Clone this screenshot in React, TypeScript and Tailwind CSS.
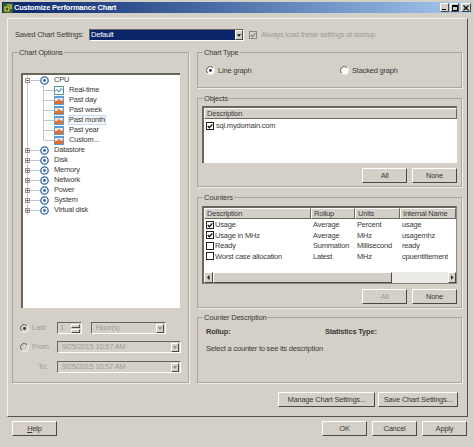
import type { ReactNode } from 'react'

const RAISED = 'border border-t-white border-l-white border-r-[#4a4842] border-b-[#4a4842]'
const SUNKEN = 'border border-t-[#6a675f] border-l-[#6a675f] border-r-white border-b-white'
const FONT = "font-['Liberation_Sans',Arial,sans-serif]"
const TRUNK = 'w-[5px] h-full shrink-0 flex items-center bg-[linear-gradient(#c4c4c4,#c4c4c4)] bg-no-repeat bg-center bg-[length:1px_100%]'

function Btn({ label, w, disabled }: { label: ReactNode; w: string; disabled?: boolean }) {
  return (
    <div className={`${w} h-[15px] ${RAISED} flex items-center justify-center whitespace-nowrap bg-[#d4d0c8] ${disabled ? 'text-[#a09c94]' : 'text-[#3a3a3a]'}`}>
      {label}
    </div>
  )
}

function Group({ title, className, children }: { title: string; className: string; children?: ReactNode }) {
  return (
    <div className={`relative border border-[#aaa69d] shadow-[1px_1px_0_#f0eee9] ${className}`}>
      <span className="absolute -top-[5px] left-[5px] px-[1px] bg-[#d4d0c8] leading-[10px] whitespace-nowrap">{title}</span>
      {children}
    </div>
  )
}

function Radio({ on, dim }: { on?: boolean; dim?: boolean }) {
  return (
    <svg width="9" height="9" viewBox="0 0 9 9" className="shrink-0">
      <circle cx="4.5" cy="4.5" r="4" fill={dim ? '#d4d0c8' : '#fff'} stroke="#f4f3f0" />
      <path d="M1.6 7A3.8 3.8 0 0 1 7 1.6" fill="none" stroke="#55534d" />
      {on && <circle cx="4.5" cy="4.5" r="1.4" fill="#333" />}
    </svg>
  )
}

function Check({ on, dim }: { on?: boolean; dim?: boolean }) {
  return (
    <svg width="8" height="8" viewBox="0 0 8 8" className="shrink-0">
      <rect x="0.5" y="0.5" width="7" height="7" fill={dim ? '#d4d0c8' : '#fff'} stroke={dim ? '#8a877f' : '#222'} />
      {on && <path d="M1.8 4l1.6 1.7 2.9-3.3" fill="none" stroke={dim ? '#8a877f' : '#111'} strokeWidth="1.3" />}
    </svg>
  )
}

function Arrow({ dir, dim }: { dir: 'down' | 'left' | 'right'; dim?: boolean }) {
  const d = dir === 'down' ? 'M1 2h5L3.5 5z' : dir === 'left' ? 'M4.5 1v5L2 3.5z' : 'M2.5 1v5L5 3.5z'
  return (
    <svg width="7" height="7" viewBox="0 0 7 7">
      <path d={d} fill={dim ? '#8a877f' : '#111'} />
    </svg>
  )
}

function Combo({ w, text }: { w: string; text: string }) {
  return (
    <div className={`${w} h-[12px] ${SUNKEN} flex items-center justify-between text-[#a09c94]`}>
      <span className="pl-[4px] leading-none whitespace-nowrap">{text}</span>
      <div className={`w-[8px] h-[9px] mr-[1px] ${RAISED} flex items-center justify-center`}>
        <Arrow dir="down" dim />
      </div>
    </div>
  )
}

function Target() {
  return (
    <svg width="9" height="9" viewBox="0 0 9 9" className="shrink-0">
      <circle cx="4.5" cy="4.5" r="3.7" fill="#fff" stroke="#2f68ac" strokeWidth="1.3" />
      <circle cx="4.5" cy="4.5" r="1.4" fill="#2f68ac" />
    </svg>
  )
}

function Expander({ open }: { open?: boolean }) {
  return (
    <svg width="5" height="5" viewBox="0 0 5 5" className="shrink-0">
      <rect x="0.5" y="0.5" width="4" height="4" fill="#fff" stroke="#9a978f" />
      <path d={open ? 'M1.5 2.5h2' : 'M1.5 2.5h2M2.5 1.5v2'} stroke="#333" />
    </svg>
  )
}

function ChartIcon({ live }: { live?: boolean }) {
  return (
    <svg width="10" height="9" viewBox="0 0 10 9" className="shrink-0">
      {live ? (
        <>
          <rect x="0.5" y="0.5" width="9" height="8" fill="#fff" stroke="#4f9c8a" />
          <path d="M1 5.5l2-2 2 2.5 2-3.5 2 2" fill="none" stroke="#3a78c0" />
        </>
      ) : (
        <>
          <rect width="10" height="9" fill="#5b9bd8" />
          <rect x="1" y="2" width="8" height="6" fill="#f3e6d8" />
          <path d="M1 8V5h2.5v3zM3.5 8V3.5H6V8zM6 8V4.5h3V8z" fill="#e0712a" />
        </>
      )}
    </svg>
  )
}

const CHILDREN = ['Real-time', 'Past day', 'Past week', 'Past month', 'Past year', 'Custom...']
const NODES = ['Datastore', 'Disk', 'Memory', 'Network', 'Power', 'System', 'Virtual disk']

function Tree() {
  return (
    <div className="w-[159px] h-[235px] mx-auto mt-[20px] bg-white border-t-2 border-l-2 border-t-[#6a675f] border-l-[#6a675f] pl-[2px]">
      <div className="h-[10px] flex items-center">
        <div className={TRUNK}><Expander open /></div>
        <span className="w-[10px] border-t border-[#c4c4c4]" />
        <Target />
        <span className="ml-[5px] -mt-[1px]">CPU</span>
      </div>
      {CHILDREN.map((c, i) => (
        <div key={c} className="h-[10px] flex items-center">
          <div className={TRUNK} />
          <div className="ml-[13px] w-[11px] h-full shrink-0 flex flex-col">
            <span className={`border-l border-[#c4c4c4] ${i === CHILDREN.length - 1 ? 'h-1/2' : 'h-full'}`} />
          </div>
          <span className="-ml-[10px] w-[10px] border-t border-[#c4c4c4]" />
          <ChartIcon live={c === 'Real-time'} />
          <span className={`ml-[4px] px-[1px] leading-[10px] -mt-[1px] ${c === 'Past month' ? 'outline outline-1 -outline-offset-1 outline-[#c9d8ea] bg-[#f4f8fc]' : ''}`}>{c}</span>
        </div>
      ))}
      {NODES.map((n) => (
        <div key={n} className="h-[10px] flex items-center">
          <div className={TRUNK}><Expander /></div>
          <span className="w-[10px] border-t border-[#c4c4c4]" />
          <Target />
          <span className="ml-[5px] -mt-[1px]">{n}</span>
        </div>
      ))}
    </div>
  )
}

const COUNTERS = [
  { name: 'Usage', rollup: 'Average', units: 'Percent', internal: 'usage', on: true },
  { name: 'Usage in MHz', rollup: 'Average', units: 'MHz', internal: 'usagemhz', on: true },
  { name: 'Ready', rollup: 'Summation', units: 'Millisecond', internal: 'ready', on: false },
  { name: 'Worst case allocation', rollup: 'Latest', units: 'MHz', internal: 'cpuentitlement', on: false },
]

const COLS = 'grid grid-cols-[107px_44px_45px_1fr]'
const HEAD = 'h-[11px] pl-[2px] flex items-center whitespace-nowrap overflow-hidden border border-t-white border-l-white border-r-[#6a675f] border-b-[#6a675f]'

export default function App() {
  return (
    <div className={`w-[474px] h-[447px] bg-[#d4d0c8] overflow-hidden flex flex-col ${FONT} text-[7.5px] tracking-[-0.2px] text-[#3a3a3a]`}>
      {/* Title bar */}
      <div className="mt-[2px] mx-[2px] h-[11px] shrink-0 flex items-center bg-gradient-to-r from-[#0a246a] to-[#a6caf0]">
        <svg width="10" height="10" viewBox="0 0 10 10" className="ml-[1px] shrink-0">
          <rect width="10" height="10" fill="#2f5d2a" />
          <path d="M2 4h4v4H2zM4 2h4v4" fill="none" stroke="#e9d64a" strokeWidth="1.2" />
        </svg>
        <span className="ml-[1px] font-bold text-white leading-none whitespace-nowrap">Customize Performance Chart</span>
        <div className="ml-auto mr-[1px] flex items-center gap-[1px]">
          <div className={`w-[9px] h-[9px] bg-[#d4d0c8] ${RAISED} flex items-end justify-start pl-[1px] pb-[1px]`}>
            <span className="w-[4px] h-[1px] bg-black" />
          </div>
          <div className={`w-[9px] h-[9px] bg-[#d4d0c8] ${RAISED} flex items-center justify-center`}>
            <span className="w-[6px] h-[6px] border border-t-2 border-black" />
          </div>
          <div className={`w-[10px] h-[9px] ml-[1px] bg-[#d4d0c8] ${RAISED} flex items-center justify-center`}>
            <svg width="6" height="6" viewBox="0 0 6 6"><path d="M.5.5l5 5M5.5.5l-5 5" stroke="#000" strokeWidth="1.1" /></svg>
          </div>
        </div>
      </div>

      {/* Main panel */}
      <div className="mt-[5px] ml-[7px] w-[461px] h-[399px] shrink-0 border border-t-[#f2f0ec] border-l-[#f2f0ec] border-r-[#55534d] border-b-[#55534d] pl-[4px]">
        <div className="mt-[10px] h-[12px] flex items-center">
          <span className="ml-[3px] w-[74px] whitespace-nowrap">Saved Chart Settings:</span>
          <div className={`w-[155px] h-[12px] ${SUNKEN} flex items-center justify-between bg-[#0a246a]`}>
            <span className="pl-[1px] text-white leading-none">Default</span>
            <div className={`w-[8px] h-[10px] bg-[#d4d0c8] ${RAISED} flex items-center justify-center`}>
              <Arrow dir="down" />
            </div>
          </div>
          <span className="ml-[5px]"><Check on dim /></span>
          <span className="ml-[4px] text-[#a09c94] whitespace-nowrap">Always load these settings at startup</span>
        </div>

        <div className="mt-[11px] flex gap-[8px]">
          {/* Left column */}
          <Group title="Chart Options" className="w-[177px] h-[331px]">
            <Tree />
            <div className="mt-[14px] h-[12px] flex items-center text-[#a09c94]">
              <span className="ml-[7px]"><Radio on dim /></span>
              <span className="ml-[3px] w-[25px]">Last</span>
              <div className={`w-[25px] h-[12px] ${SUNKEN} flex items-center justify-between pl-[2px]`}>
                <span>1</span>
                <div className="w-[9px] h-[9px] mr-[1px] flex flex-col gap-[1px]">
                  <span className={`flex-1 ${RAISED}`} />
                  <span className={`flex-1 ${RAISED}`} />
                </div>
              </div>
              <div className="ml-[9px]"><Combo w="w-[75px]" text="Hour(s)" /></div>
            </div>
            <div className="mt-[7px] h-[12px] flex items-center text-[#a09c94]">
              <span className="ml-[7px]"><Radio dim /></span>
              <span className="ml-[3px] w-[25px]">From</span>
              <Combo w="w-[124px]" text="9/25/2015 10:57 AM" />
            </div>
            <div className="mt-[8px] h-[12px] flex items-center text-[#a09c94]">
              <span className="ml-[25px] w-[19px]">To:</span>
              <Combo w="w-[124px]" text="9/25/2015 10:57 AM" />
            </div>
          </Group>

          {/* Right column */}
          <div className="w-[265px] flex flex-col">
            <Group title="Chart Type" className="h-[36px] flex items-center pt-[1px]">
              <span className="ml-[8px]"><Radio on /></span>
              <span className="ml-[3px] w-[122px]">Line graph</span>
              <Radio />
              <span className="ml-[3px]">Stacked graph</span>
            </Group>

            <Group title="Objects" className="mt-[10px] h-[89px] px-[4px] pt-[7px]">
              <div className="h-[57px] bg-white border-t-2 border-l-2 border-t-[#6a675f] border-l-[#6a675f]">
                <div className={HEAD + ' bg-[#d4d0c8]'}>Description</div>
                <div className="flex items-center gap-[2px] pl-[2px] pt-[1px]">
                  <Check on />
                  <span>sql.mydomain.com</span>
                </div>
              </div>
              <div className="mt-[5px] flex justify-end gap-[5px]">
                <Btn label="All" w="w-[45px]" />
                <Btn label="None" w="w-[45px]" />
              </div>
            </Group>

            <Group title="Counters" className="mt-[10px] h-[111px] px-[4px] pt-[8px]">
              <div className="h-[78px] flex flex-col bg-white border-t-2 border-l-2 border-t-[#6a675f] border-l-[#6a675f] border-r border-b border-r-[#8a877f] border-b-[#8a877f]">
                <div className={`${COLS} bg-[#d4d0c8] shrink-0`}>
                  <div className={HEAD}>Description</div>
                  <div className={HEAD}>Rollup</div>
                  <div className={HEAD}>Units</div>
                  <div className={HEAD}>Internal Name</div>
                </div>
                <div className="flex-1">
                  {COUNTERS.map((r) => (
                    <div key={r.name} className={`${COLS} h-[10.5px] items-center`}>
                      <div className="flex items-center gap-[1px] pl-[2px]">
                        <Check on={r.on} />
                        <span className="whitespace-nowrap">{r.name}</span>
                      </div>
                      <span className="pl-[2px]">{r.rollup}</span>
                      <span className="pl-[2px]">{r.units}</span>
                      <span className="pl-[2px]">{r.internal}</span>
                    </div>
                  ))}
                </div>
                <div className="h-[11px] shrink-0 flex bg-[#ecebe7]">
                  <div className={`w-[9px] bg-[#d4d0c8] ${RAISED} flex items-center justify-center`}><Arrow dir="left" /></div>
                  <div className={`w-[179px] bg-[#d4d0c8] ${RAISED}`} />
                  <div className="flex-1" />
                  <div className={`w-[8px] bg-[#d4d0c8] ${RAISED} flex items-center justify-center`}><Arrow dir="right" /></div>
                </div>
              </div>
              <div className="mt-[5px] flex justify-end gap-[5px]">
                <Btn label="All" w="w-[45px]" disabled />
                <Btn label="None" w="w-[45px]" />
              </div>
            </Group>

            <Group title="Counter Description" className="mt-[9px] flex-1">
              <div className="mt-[8px] ml-[8px] flex font-bold">
                <span className="w-[119px]">Rollup:</span>
                <span>Statistics Type:</span>
              </div>
              <div className="mt-[6px] ml-[8px]">Select a counter to see its description</div>
            </Group>
          </div>
        </div>

        <div className="mt-[9px] flex justify-end gap-[3px] pr-[9px]">
          <Btn label="Manage Chart Settings..." w="w-[97px]" />
          <Btn label="Save Chart Settings..." w="w-[80px]" />
        </div>
      </div>

      {/* Footer */}
      <div className="mt-[4px] flex pl-[12px] pr-[7px]">
        <Btn label={<span><span className="underline">H</span>elp</span>} w="w-[45px]" />
        <div className="ml-auto flex gap-[5px]">
          <Btn label="OK" w="w-[45px]" />
          <Btn label="Cancel" w="w-[45px]" />
          <Btn label="Apply" w="w-[45px]" />
        </div>
      </div>
    </div>
  )
}
